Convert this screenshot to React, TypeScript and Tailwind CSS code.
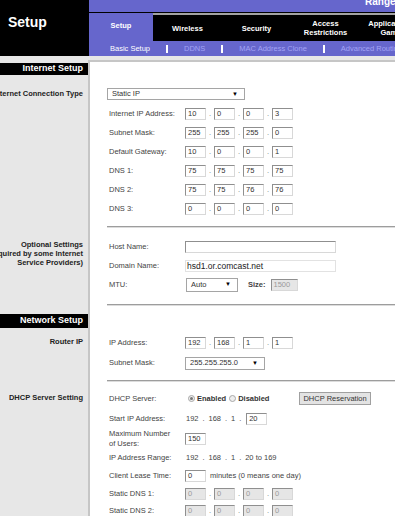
import React from "react";

// ============ SMALL FORM PIECES ============
function Box({ value, w = 21, disabled = false }: { value: string; w?: number; disabled?: boolean }) {
  return (
    <div
      style={{ width: w }}
      className={`h-[12px] border border-t-[#8f8f8f] border-l-[#8f8f8f] border-r-[#d8d8d8] border-b-[#d8d8d8] pl-[2px] text-[7.5px] leading-[10px] ${
        disabled ? "bg-[#e6e6e6] text-[#9a9a9a]" : "bg-white text-[#333]"
      }`}
    >
      {value}
    </div>
  );
}

function IpBoxes({ values, disabled = false }: { values: string[]; disabled?: boolean }) {
  return (
    <div className="flex items-center">
      {values.map((v, i) => (
        <React.Fragment key={i}>
          {i > 0 && <span className="w-[8px] text-center text-[7.5px] text-[#777]">.</span>}
          <Box value={v} disabled={disabled} />
        </React.Fragment>
      ))}
    </div>
  );
}

function Select({ value, className }: { value: string; className: string }) {
  return (
    <div
      className={`flex items-center justify-between border border-[#a5a5a5] bg-white pl-[4px] pr-[6px] text-[7.5px] text-[#333] ${className}`}
    >
      <span>{value}</span>
      <span className="text-[6px] text-black">▼</span>
    </div>
  );
}

function Row({ label, h, children }: { label: React.ReactNode; h: string; children?: React.ReactNode }) {
  return (
    <div className={`flex items-center ${h}`}>
      <div className="w-[76px] shrink-0 text-[7.5px] leading-[10px] text-[#444]">{label}</div>
      {children}
    </div>
  );
}

function Sep({ className }: { className: string }) {
  return <div className={`ml-[-2px] h-[2px] border-t border-[#9d9d9d] bg-[#dcdcdc] ${className}`} />;
}

function Dotted({ parts }: { parts: string[] }) {
  return (
    <div className="ml-[1px] flex items-center text-[7.5px] text-[#444]">
      {parts.map((p, i) => (
        <React.Fragment key={i}>
          {i > 0 && <span className="w-[10px] text-center">.</span>}
          <span>{p}</span>
        </React.Fragment>
      ))}
    </div>
  );
}

function Radio({ on }: { on: boolean }) {
  return (
    <div className="flex h-[7px] w-[7px] items-center justify-center rounded-full border border-[#a8a8a8] bg-[#eeeeee]">
      {on && <div className="h-[3px] w-[3px] rounded-full bg-[#777]" />}
    </div>
  );
}

// ============ LEFT COLUMN PIECES ============
function SectionBar({ title, h }: { title: string; h: string }) {
  return (
    <div className={`flex items-center justify-end bg-black pr-[5px] text-[9px] font-bold text-white ${h}`}>
      {title}
    </div>
  );
}

function SideLabel({ text, className = "" }: { text: string; className?: string }) {
  return (
    <div className={`flex justify-end overflow-hidden whitespace-nowrap pr-[5px] text-[7.5px] font-bold text-[#222] ${className}`}>
      {text}
    </div>
  );
}

const tabs = ["Wireless", "Security", "Access\nRestrictions", "Applications &\nGaming"];

export default function App() {
  return (
    <div className="flex h-[516px] w-[395px] flex-col overflow-hidden bg-[#e7e7e7] font-['Liberation_Sans',Arial,sans-serif]">
      {/* Header */}
      <div className="flex h-[56px] shrink-0">
        <div className="flex w-[89px] shrink-0 items-center bg-black pb-[12px] pl-[8px] text-[14px] font-bold text-white">
          Setup
        </div>
        <div className="flex min-w-0 flex-1 flex-col overflow-hidden bg-[#6666cc]">
          <div className="h-[12px] overflow-hidden">
            <div className="-mt-[3px] whitespace-nowrap pl-[276px] text-[10px] font-bold leading-[10px] text-white">
              RangeBooster
            </div>
          </div>
          <div className="h-[1px] bg-black" />
          <div className="flex h-[28px]">
            <div className="flex w-[64px] shrink-0 items-center justify-center pb-[2px] text-[7.5px] font-bold text-white">
              Setup
            </div>
            <div className="flex flex-1 border-t-2 border-[#a3a3a3] bg-black">
              {tabs.map((t) => (
                <div
                  key={t}
                  className="flex w-[69px] shrink-0 items-center justify-center whitespace-pre text-center text-[7.5px] font-bold leading-[9px] text-white"
                >
                  {t}
                </div>
              ))}
            </div>
          </div>
          <div className="flex h-[15px] items-center gap-[16px] whitespace-nowrap pl-[21px] text-[7.5px] text-[#a3a3f5]">
            <span className="text-white">Basic Setup</span>
            <div className="h-[8px] w-[2px] shrink-0 bg-white" />
            <span>DDNS</span>
            <div className="h-[8px] w-[2px] shrink-0 bg-white" />
            <span>MAC Address Clone</span>
            <div className="h-[8px] w-[2px] shrink-0 bg-white" />
            <span>Advanced Routing</span>
          </div>
        </div>
      </div>

      {/* Body */}
      <div className="flex flex-1">
        <div className="w-[88px] shrink-0">
          <SectionBar title="Internet Setup" h="mt-[7px] h-[12px]" />
          <SideLabel text="Internet Connection Type" className="mt-[13px] leading-[12px]" />
          <div className="mt-[140px] leading-[9px]">
            <SideLabel text="Optional Settings" />
            <SideLabel text="(required by some Internet" />
            <SideLabel text="Service Providers)" />
          </div>
          <SectionBar title="Network Setup" h="mt-[47px] h-[14px]" />
          <SideLabel text="Router IP" className="mt-[8px] leading-[12px]" />
          <SideLabel text="DHCP Server Setting" className="mt-[44px] leading-[12px]" />
        </div>

        <div className="flex-1 pt-[4px]">
          <div className="h-full border-l-2 border-t-2 border-[#c6c6c6] bg-white pl-[19px]">
            <Select value="Static IP" className="ml-[-2px] mt-[26px] h-[12px] w-[138px]" />
            <div className="mt-[4px]">
              <Row label="Internet IP Address:" h="h-[19px]"><IpBoxes values={["10", "0", "0", "3"]} /></Row>
              <Row label="Subnet Mask:" h="h-[19px]"><IpBoxes values={["255", "255", "255", "0"]} /></Row>
              <Row label="Default Gateway:" h="h-[19px]"><IpBoxes values={["10", "0", "0", "1"]} /></Row>
              <Row label="DNS 1:" h="h-[19px]"><IpBoxes values={["75", "75", "75", "75"]} /></Row>
              <Row label="DNS 2:" h="h-[19px]"><IpBoxes values={["75", "75", "76", "76"]} /></Row>
              <Row label="DNS 3:" h="h-[19px]"><IpBoxes values={["0", "0", "0", "0"]} /></Row>
            </div>
            <Sep className="mt-[8px]" />

            <div className="mt-[9px]">
              <Row label="Host Name:" h="h-[19px]"><Box value="" w={151} /></Row>
              <Row label="Domain Name:" h="h-[19px]">
                <div className="h-[12px] w-[151px] border border-[#e2e2e2] pl-[1px] text-[8.5px] leading-[10px] text-[#222]">
                  hsd1.or.comcast.net
                </div>
              </Row>
              <Row label="MTU:" h="h-[19px]">
                <Select value="Auto" className="ml-[1px] h-[14px] w-[52px]" />
                <span className="ml-[10px] text-[7.5px] font-bold text-[#444]">Size:</span>
                <div className="ml-[5px]"><Box value="1500" w={27} disabled /></div>
              </Row>
            </div>
            <Sep className="mt-[10px]" />

            <div className="mt-[27px]">
              <Row label="IP Address:" h="h-[20px]"><IpBoxes values={["192", "168", "1", "1"]} /></Row>
              <Row label="Subnet Mask:" h="h-[20px]">
                <Select value="255.255.255.0" className="h-[13px] w-[80px]" />
              </Row>
            </div>
            <Sep className="mt-[7px]" />

            <div className="mt-[7px]">
              <Row label="DHCP Server:" h="h-[19px]">
                <div className="ml-[3px]"><Radio on /></div>
                <span className="ml-[2px] text-[7.5px] font-bold text-[#333]">Enabled</span>
                <div className="ml-[3px]"><Radio on={false} /></div>
                <span className="ml-[2px] text-[7.5px] font-bold text-[#333]">Disabled</span>
                <button className="ml-[30px] h-[13px] border border-[#a0a0a0] bg-[#e3e3e3] px-[3px] text-[7.5px] leading-[10px] text-[#333]">
                  DHCP Reservation
                </button>
              </Row>
              <Row label="Start IP Address:" h="h-[21px]">
                <Dotted parts={["192", "168", "1", ""]} />
                <div className="ml-[1px]"><Box value="20" /></div>
              </Row>
              <Row label={<>Maximum Number<br />of Users:</>} h="h-[19px]"><Box value="150" /></Row>
              <Row label="IP Address Range:" h="h-[19px]">
                <Dotted parts={["192", "168", "1", "20 to 169"]} />
              </Row>
              <Row label="Client Lease Time:" h="h-[18px]">
                <Box value="0" />
                <span className="ml-[4px] text-[7.5px] text-[#444]">minutes (0 means one day)</span>
              </Row>
              <Row label="Static DNS 1:" h="h-[17px]"><IpBoxes values={["0", "0", "0", "0"]} disabled /></Row>
              <Row label="Static DNS 2:" h="h-[17px]"><IpBoxes values={["0", "0", "0", "0"]} disabled /></Row>
            </div>
          </div>
        </div>
      </div>
    </div>
  );
}
